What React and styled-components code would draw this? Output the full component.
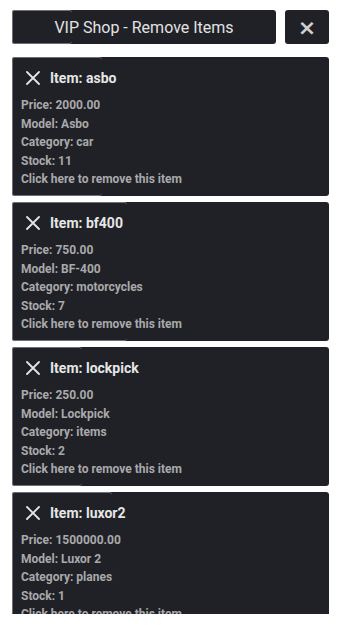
import React from 'react';
import styled, { createGlobalStyle } from 'styled-components';

const GlobalStyle = createGlobalStyle`
  html, body {
    margin: 0;
    padding: 0;
    background: #ffffff;
    font-family: Roboto, "Liberation Sans", sans-serif;
  }
`;

const Page = styled.div`
  padding: 10px 14px 0 12px;
  display: flex;
  flex-direction: column;
  gap: 13px;
`;

const Header = styled.div`
  display: flex;
  gap: 9px;
  height: 34px;
`;

const edge = `
  position: relative;
  &::before {
    content: '';
    position: absolute;
    inset: 0;
    border-radius: inherit;
    pointer-events: none;
    border-left: 1px solid #6f7076;
  }
  &::after {
    content: '';
    position: absolute;
    left: 0;
    top: 0;
    bottom: 0;
    border-radius: inherit;
    pointer-events: none;
    border-top: 1px solid #6f7076;
    border-bottom: 1px solid #6f7076;
  }
`;

const TitleBox = styled.div`
  ${edge}
  &::after { width: ${(p) => p.$edge}px; }
  flex: 1;
  background: #202126;
  border-radius: 3px;
  display: flex;
  align-items: center;
  justify-content: center;
  color: #e2e2e2;
  font-size: 16px;
`;

const CloseButton = styled.button`
  width: 44px;
  border: none;
  background: #202126;
  border-radius: 3px;
  color: #cfcfcf;
  font-size: 22px;
  font-weight: 700;
  font-family: "DejaVu Sans", sans-serif;
  display: flex;
  align-items: center;
  justify-content: center;
  padding: 0;
  cursor: pointer;
`;

const List = styled.div`
  height: 557px;
  overflow: hidden;
  display: flex;
  flex-direction: column;
  gap: 6px;
`;

const Card = styled.div`
  ${edge}
  &::after { width: ${(p) => p.$edge}px; }
  flex-shrink: 0;
  background: #202126;
  border-radius: 3px;
  padding: 11px 9px 7.5px;
`;

const CardTitle = styled.div`
  display: flex;
  align-items: center;
  gap: 10px;
  height: 20px;
  margin: 0 0 8px 5px;
  color: #e6e6e6;
  font-size: 14px;
  font-weight: 700;
`;

const Line = styled.div`
  color: #a9a9ab;
  font-size: 12px;
  font-weight: 700;
  line-height: 18.5px;
  white-space: nowrap;
`;

const RemoveLink = styled(Line)`
  cursor: pointer;
`;

const XIcon = () => (
  <svg width="14" height="14" viewBox="0 0 14 14">
    <path d="M1 1 L13 13 M13 1 L1 13" stroke="#e4e4e4" strokeWidth="1.8" strokeLinecap="round" fill="none" />
  </svg>
);

const items = [
  { name: 'asbo', price: '2000.00', model: 'Asbo', category: 'car', stock: 11, edge: 90 },
  { name: 'bf400', price: '750.00', model: 'BF-400', category: 'motorcycles', stock: 7, edge: 115 },
  { name: 'lockpick', price: '250.00', model: 'Lockpick', category: 'items', stock: 2, edge: 70 },
  { name: 'luxor2', price: '1500000.00', model: 'Luxor 2', category: 'planes', stock: 1, edge: 100 },
];

export default function App() {
  return (
    <>
      <GlobalStyle />
      <Page>
        <Header>
          <TitleBox $edge={60}>VIP Shop - Remove Items</TitleBox>
          <CloseButton>×</CloseButton>
        </Header>
        <List>
          {items.map((item) => (
            <Card key={item.name} $edge={item.edge}>
              <CardTitle>
                <XIcon />
                Item: {item.name}
              </CardTitle>
              <Line>Price: {item.price}</Line>
              <Line>Model: {item.model}</Line>
              <Line>Category: {item.category}</Line>
              <Line>Stock: {item.stock}</Line>
              <RemoveLink>Click here to remove this item</RemoveLink>
            </Card>
          ))}
        </List>
      </Page>
    </>
  );
}
